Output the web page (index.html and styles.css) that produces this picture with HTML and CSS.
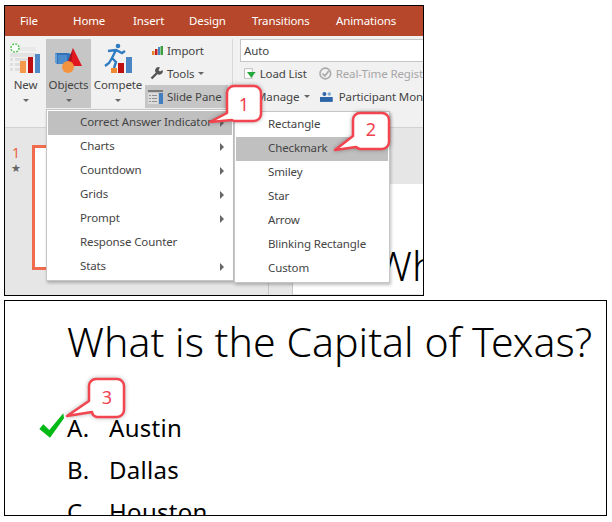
FILE: index.html
```html
<!DOCTYPE html>
<html lang="en">
<head>
<meta charset="utf-8">
<title>Correct answer indicator</title>
<link rel="stylesheet" href="styles.css">
</head>
<body>
<section class="app">
  <nav class="tabs">
    <span class="tab tab-file">File</span>
    <span class="tab tab-home">Home</span>
    <span class="tab tab-insert">Insert</span>
    <span class="tab tab-design">Design</span>
    <span class="tab tab-trans">Transitions</span>
    <span class="tab">Animations</span>
  </nav>
  <div class="ribbon">
    <div class="big big-new">
      <svg class="big-icon" width="41" height="34" viewBox="5 43 41 34"><path d="M17 47h19v4H17z" fill="#e9e9e9"/><path d="M10 53h26v4H10z" fill="#e2e2e2"/><path d="M10 58h3v3h-3zM15 58h13v3H15zM10 63h3v3h-3zM15 63h10v3H15zM10 68h3v3h-3zM15 68h10v3H15z" fill="#dedede"/><circle cx="15" cy="48" r="4" fill="#fff" stroke="#5cc45c" stroke-width="1.600" stroke-dasharray="1.800 1.300"/><rect x="20" y="61" width="6" height="12" fill="#f59a4a"/><rect x="28" y="57" width="5" height="16" fill="#bd0f12"/><rect x="35" y="54" width="5" height="19" fill="#4f8ac6"/></svg>
      <span class="big-label">New</span>
      <span class="caret"></span>
    </div>
    <div class="big big-objects">
      <svg class="big-icon" width="45" height="34" viewBox="46 43 45 34"><path d="M55 53h13l3 1v10H57l-2-2z" fill="#2f72b8"/><path d="M55 53l2 1v10l-2-2z" fill="#6aa0d8"/><path d="M58 55h9v9h-9z" fill="#4a8bcc"/><path d="M73 48l9 18H68z" fill="#e2161f"/><path d="M73 48l-2 16h-4z" fill="#a8151c"/><circle cx="68" cy="67" r="6" fill="#f4933f"/></svg>
      <span class="big-label">Objects</span>
      <span class="caret"></span>
    </div>
    <div class="big big-compete">
      <svg class="big-icon" width="54" height="34" viewBox="91 43 54 34"><circle cx="118" cy="46" r="2.300" fill="#2f7cc2"/><path d="M108 51l8-1 6 3 3-2M116 50l-4 8 4 4-2 6M112 58l-3 5-4 3" fill="none" stroke="#2f7cc2" stroke-width="2.400"/><rect x="111" y="68" width="6" height="5" fill="#f08a30"/><rect x="118" y="63" width="6" height="10" fill="#c00f0f"/><rect x="126" y="57" width="6" height="16" fill="#4a86c4"/></svg>
      <span class="big-label">Compete</span>
      <span class="caret"></span>
    </div>
    <div class="stack stack-one">
      <div class="line line-import"><svg width="11" height="9" viewBox="0 0 11 9"><rect x="0" y="5" width="2.500" height="4" fill="#e8832a"/><rect x="3" y="3" width="2.500" height="6" fill="#c32020"/><rect x="6" y="1" width="2" height="8" fill="#4a86c4"/><rect x="8.500" y="0" width="2.500" height="9" fill="#3aa040"/></svg><span>Import</span></div>
      <div class="line line-tools"><svg width="13" height="13" viewBox="0 0 13 13"><path d="M1.500 11.500L8 5" stroke="#555" stroke-width="2.400" fill="none"/><path d="M7 6.500a3.300 3.300 0 0 1 3-6L8.500 3l1.500 1.500L12.500 3a3.300 3.300 0 0 1-5.500 3.500z" fill="#555"/></svg><span>Tools</span><span class="caret caret-in"></span></div>
      <div class="line line-on"><svg width="15" height="14" viewBox="0 0 15 14"><rect width="15" height="2" fill="#7a7a7a"/><rect y="3" width="10" height="11" fill="#dcdcdc"/><path d="M1 5.500h2M4 5.500h5M1 8.500h2M4 8.500h5M1 11.500h2M4 11.500h5" stroke="#8f8f8f"/><rect x="11" y="3" width="4" height="11" fill="#3f7fc0"/></svg><span>Slide Pane</span></div>
    </div>
    <div class="divider"></div>
    <div class="stack stack-two">
      <div class="auto-field">Auto</div>
      <div class="line line-load"><svg width="12" height="11" viewBox="0 0 12 11"><path d="M.5.500h8v10h-8z" fill="#fff" stroke="#bcbcbc"/><path d="M3 4h9L7.500 10z" fill="#25a83c"/></svg><span class="load-label">Load List</span><svg width="13" height="13" viewBox="0 0 13 13"><circle cx="6.500" cy="6.500" r="5.500" fill="none" stroke="#a9a9a9" stroke-width="1.600"/><path d="M3.500 6.500L6 9l4-5" fill="none" stroke="#a9a9a9" stroke-width="1.800"/></svg><span class="muted">Real-Time Regist</span></div>
      <div class="line line-manage"><span class="manage-label">Manage</span><span class="caret caret-in"></span><svg class="people" width="13" height="10" viewBox="0 0 13 10"><circle cx="4.500" cy="2" r="2" fill="#2d66a8"/><circle cx="9.500" cy="2" r="1.800" fill="#7da9d4"/><rect x="0" y="5" width="13" height="5" fill="#2d66a8"/></svg><span>Participant Mon</span></div>
    </div>
  </div>
  <div class="workspace">
    <aside class="thumbs">
      <div class="thumb-num"><span>1</span><span class="thumb-star">★</span></div>
      <div class="thumb"></div>
    </aside>
    <div class="splitter"></div>
    <main class="canvas"><div class="canvas-slide">Wh</div></main>
  </div>

  <ul class="menu menu-main">
    <li class="item item-on">Correct Answer Indicator<i class="arrow"></i></li>
    <li class="item">Charts<i class="arrow"></i></li>
    <li class="item">Countdown<i class="arrow"></i></li>
    <li class="item">Grids<i class="arrow"></i></li>
    <li class="item">Prompt<i class="arrow"></i></li>
    <li class="item">Response Counter</li>
    <li class="item">Stats<i class="arrow"></i></li>
  </ul>
  <ul class="menu menu-sub">
    <li class="item">Rectangle</li>
    <li class="item item-on">Checkmark</li>
    <li class="item">Smiley</li>
    <li class="item">Star</li>
    <li class="item">Arrow</li>
    <li class="item">Blinking Rectangle</li>
    <li class="item">Custom</li>
  </ul>

  <div class="callout callout-1">
    <svg width="54" height="40" viewBox="208 84 54 40"><path class="bubble" d="M234 86h20a7 7 0 0 1 7 7v21a7 7 0 0 1-7 7h-20l-2-1-22 2 17-9V93a7 7 0 0 1 7-7z"/></svg>
    <span>1</span>
  </div>
  <div class="callout callout-2">
    <svg width="56" height="40" viewBox="334 111 56 40"><path class="bubble" d="M360 113h22a7 7 0 0 1 7 7v22a7 7 0 0 1-7 7h-22a7 7 0 0 1-4-2l-21 3 18-14v-16a7 7 0 0 1 7-7z"/></svg>
    <span>2</span>
  </div>
</section>

<section class="slide">
  <h1>What is the Capital of Texas?</h1>
  <ol class="answers">
    <li><b>A.</b>Austin</li>
    <li><b>B.</b>Dallas</li>
    <li><b>C.</b>Houston</li>
  </ol>
  <svg class="check" width="26" height="26" viewBox="0 0 26 26"><path d="M.3 16l4-4.700 6 5.700L24.300.3l.7 5-14 19.400z" fill="#00b915"/></svg>
  <div class="callout callout-3">
    <svg width="60" height="42" viewBox="66 377 60 42"><path class="bubble" d="M96 379h21a7 7 0 0 1 7 7v24a7 7 0 0 1-7 7H97a6 6 0 0 1-5-5l-25 4 22-15v-15a7 7 0 0 1 7-7z"/></svg>
    <span>3</span>
  </div>
</section>
</body>
</html>
```

FILE: styles.css
```css
* { box-sizing: border-box; }
html, body { margin: 0; padding: 0; background: #fff; }
body { padding: 5px 0 0 4px; width: 612px; height: 522px; overflow: hidden; font-family: "Noto Sans", "Open Sans", sans-serif; }

.app { position: relative; width: 420px; height: 291px; border: 1px solid #000; overflow: hidden; background: #e6e6e6; display: flex; flex-direction: column; font-size: 11.5px; letter-spacing: -0.12px; color: #444; }
.tabs { flex: none; height: 30px; padding-bottom: 1px; background: #b7472a; color: #fff; display: flex; align-items: center; padding-left: 15px; }
.tab-file { width: 53px; }
.tab-home { width: 60px; }
.tab-insert { width: 56px; }
.tab-design { width: 63px; }
.tab-trans { width: 84px; }

.ribbon { flex: none; height: 92px; background: #f1f1f1; border-bottom: 1px solid #d2d2d2; display: flex; position: relative; }
.big { display: flex; flex-direction: column; align-items: center; padding-top: 4px; height: 69px; margin-top: 3px; }
.big-icon { height: 34px; flex: none; display: block; }
.big-label { line-height: 17px; margin-top: -1px; }
.big-new { width: 41px; }
.big-objects { width: 45px; background: #c6c6c6; }
.big-compete { width: 54px; }
.caret { width: 0; height: 0; border: 3px solid transparent; border-top-color: #666; border-bottom: 0; margin-top: 6px; }
.line .caret-in { margin: 0; }

.stack { display: flex; flex-direction: column; padding-top: 3px; }
.stack-one { width: 83px; }
.line { height: 23px; display: flex; align-items: center; gap: 4px; white-space: nowrap; flex: none; }
.line-import { padding-left: 7px; }
.line-tools { padding-left: 5px; }
.line-on { background: #c6c6c6; padding-left: 3px; }
.divider { width: 1px; height: 80px; background: #d8d8d8; margin: 3px 7px 0 4px; }
.stack-two { flex: 1; min-width: 0; }
.auto-field { height: 23px; background: #fff; border: 1px solid #c6c6c6; border-right: 0; line-height: 21px; padding-left: 3px; flex: none; }
.line-load { padding-left: 4px; }
.load-label { width: 57px; }
.muted { color: #a6a6a6; }
.line-manage { padding-left: 16px; }
.manage-label { width: 46px; margin-right: -1px; }
.people { margin-left: 6px; margin-right: 2px; }

.workspace { flex: 1; display: flex; background: #e6e6e6; }
.thumbs { width: 264px; display: flex; padding: 17px 0 0 6px; align-items: flex-start; border-right: 1px solid #c8c8c8; }
.thumb-num { width: 21px; display: flex; flex-direction: column; color: #e9603f; font-size: 14px; line-height: 15px; padding-left: 1px; }
.thumb-star { color: #666; font-size: 11px; line-height: 12px; margin: 2px 0 0 -1px; }
.thumb { width: 100px; height: 125px; border: 3px solid #ef6c4c; background: #fff; }
.splitter { width: 24px; background: #e6e6e6; border-right: 1px solid #c8c8c8; }
.canvas { flex: 1; padding-top: 56px; min-width: 0; }
.canvas-slide { background: #fff; height: 110px; color: #000; font-size: 41px; letter-spacing: 0; line-height: 50px; padding: 56px 0 0 82px; overflow: hidden; font-weight: 300; }

.menu { list-style: none; margin: 0; background: #fff; border: 1px solid #c6c6c6; box-shadow: 1px 2px 3px rgba(0,0,0,.25); position: absolute; }
.menu-main { left: 41px; top: 103px; width: 188px; padding: 1px; }
.menu-sub { left: 229px; top: 105px; width: 156px; padding: 1px; }
.item { height: 24px; line-height: 22px; position: relative; white-space: nowrap; }
.menu-main .item { padding-left: 32px; }
.menu-sub .item { padding-left: 32px; }
.item-on { background: #c0c0c0; }
.arrow { position: absolute; right: 8px; top: 8px; width: 0; height: 0; border: 4px solid transparent; border-left-color: #666; border-right: 0; }

.callout { position: absolute; color: #f0414f; font-size: 18px; letter-spacing: 0; }
.callout svg { display: block; overflow: visible; filter: drop-shadow(0 0 2px rgba(0,0,0,.3)); }
.bubble { fill: #fff; stroke: #f2454f; stroke-width: 2.500; stroke-linejoin: round; }
.callout span { position: absolute; text-align: center; line-height: 26px; }
.callout-1 { left: 203px; top: 78px; }
.callout-1 span { left: 19px; top: 7px; width: 34px; }
.callout-2 { left: 329px; top: 105px; }
.callout-2 span { left: 19px; top: 5px; width: 36px; }
.callout-3 { left: 61px; top: 76px; }
.callout-3 span { left: 23px; top: 7px; width: 36px; }

.slide { position: relative; width: 603px; height: 216px; margin-top: 4px; border: 1px solid #000; overflow: hidden; color: #000; }
.slide h1 { margin: 12px 0 0 62px; font-size: 41px; letter-spacing: 0.03px; line-height: 56px; font-weight: 300; white-space: nowrap; }
.answers { list-style: none; margin: 38px 0 0 62px; padding: 0; font-size: 24px; letter-spacing: 0.3px; line-height: 42px; }
.answers li { display: flex; }
.answers b { font-weight: 400; width: 42px; }
.check { position: absolute; left: 34px; top: 112px; }
```
